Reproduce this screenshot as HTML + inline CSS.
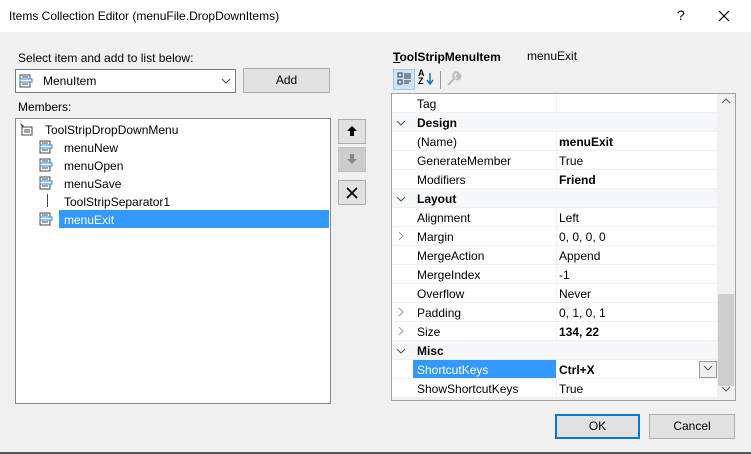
<!DOCTYPE html>
<html><head><style>
*{box-sizing:border-box;margin:0;padding:0}
body{width:751px;height:454px;background:#f0f0f0;font-family:"Liberation Sans",sans-serif;font-size:12px;color:#000;position:relative;overflow:hidden}
.a{position:absolute;white-space:nowrap}
.btn{position:absolute;background:#e1e1e1;border:1px solid #adadad;text-align:center}
.row{position:absolute;left:0;width:325px;height:19px;border-bottom:1px solid #f0f0f0;background:#fff}
.row .n{position:absolute;left:25px;top:3px}
.row .v{position:absolute;left:167px;top:3px}
.row .sep{position:absolute;left:164px;top:0;width:1px;height:19px;background:#f0f0f0}
.cat{background:#f5f7fa}
.cat .n{font-weight:bold}
.b{font-weight:bold}
</style></head><body>
<div class="a" style="left:0;top:0;width:751px;height:32px;background:#fff"></div>
<div class="a" style="left:9px;top:9px">Items Collection Editor (menuFile.DropDownItems)</div>
<div class="a" style="left:677px;top:7px;font-size:14px">?</div>
<svg class="a" style="left:718px;top:10px" width="12" height="12"><path d="M1 1L11 11M11 1L1 11" stroke="#000" stroke-width="1.2"/></svg>
<div class="a" style="left:0;top:452px;width:751px;height:2px;background:#555"></div>

<div class="a" style="left:18px;top:51px">Select item and add to list below:</div>
<div class="a" style="left:15px;top:69px;width:221px;height:24px;background:#fff;border:1px solid #7a7a7a"></div>
<svg class="a" style="left:19px;top:74px" width="14" height="14"><rect x="1" y="1" width="10" height="12" fill="none" stroke="#444"/><rect x="1" y="5" width="12" height="3" fill="#fff" stroke="#1e88e5"/><path d="M3 3H9M3 10H9" stroke="#444"/></svg>
<div class="a" style="left:43px;top:74px">MenuItem</div>
<svg class="a" style="left:221px;top:78px" width="10" height="6"><path d="M1 1L5 5L9 1" fill="none" stroke="#444"/></svg>
<div class="btn" style="left:243px;top:68px;width:87px;height:25px;line-height:23px">Add</div>

<div class="a" style="left:18px;top:100px">Members:</div>
<div class="a" style="left:15px;top:118px;width:316px;height:286px;background:#fff;border:1px solid #828790"></div>
<svg class="a" style="left:19px;top:122px" width="16" height="14"><path d="M1 1L5 4L3 5Z" fill="#333"/><rect x="3" y="5" width="10" height="8" fill="none" stroke="#444"/><path d="M5 8H11M5 10H11" stroke="#444"/></svg>
<div class="a" style="left:45px;top:123px">ToolStripDropDownMenu</div>
<svg class="a" style="left:39px;top:140px" width="14" height="14"><rect x="1" y="1" width="10" height="12" fill="none" stroke="#444"/><rect x="1" y="5" width="12" height="3" fill="#fff" stroke="#1e88e5"/><path d="M3 3H9M3 10H9" stroke="#444"/></svg>
<svg class="a" style="left:39px;top:158px" width="14" height="14"><rect x="1" y="1" width="10" height="12" fill="none" stroke="#444"/><rect x="1" y="5" width="12" height="3" fill="#fff" stroke="#1e88e5"/><path d="M3 3H9M3 10H9" stroke="#444"/></svg>
<svg class="a" style="left:39px;top:176px" width="14" height="14"><rect x="1" y="1" width="10" height="12" fill="none" stroke="#444"/><rect x="1" y="5" width="12" height="3" fill="#fff" stroke="#1e88e5"/><path d="M3 3H9M3 10H9" stroke="#444"/></svg>
<div class="a" style="left:47px;top:194px;width:1px;height:13px;background:#444"></div>
<svg class="a" style="left:39px;top:212px" width="14" height="14"><rect x="1" y="1" width="10" height="12" fill="none" stroke="#444"/><rect x="1" y="5" width="12" height="3" fill="#fff" stroke="#1e88e5"/><path d="M3 3H9M3 10H9" stroke="#444"/></svg>
<div class="a" style="left:64px;top:141px">menuNew</div>
<div class="a" style="left:64px;top:159px">menuOpen</div>
<div class="a" style="left:64px;top:177px">menuSave</div>
<div class="a" style="left:64px;top:195px">ToolStripSeparator1</div>
<div class="a" style="left:59px;top:210px;width:270px;height:18px;background:#3399ff"></div>
<div class="a" style="left:64px;top:213px;color:#fff">menuExit</div>

<div class="btn" style="left:338px;top:119px;width:28px;height:25px"></div>
<svg class="a" style="left:346px;top:125px" width="12" height="12"><path d="M6 1L11 6H8V11H4V6H1Z" fill="#000"/></svg>
<div class="btn" style="left:338px;top:147px;width:28px;height:25px;background:#cccccc;border-color:#bfbfbf"></div>
<svg class="a" style="left:346px;top:153px" width="12" height="12"><path d="M6 11L11 6H8V1H4V6H1Z" fill="#888"/></svg>
<div class="btn" style="left:338px;top:180px;width:28px;height:25px"></div>
<svg class="a" style="left:345px;top:186px" width="14" height="14"><path d="M2 2L12 12M12 2L2 12" stroke="#000" stroke-width="1.6"/></svg>

<div class="a b" style="left:393px;top:50px;text-decoration:underline;text-decoration-thickness:1px">T</div>
<div class="a b" style="left:393px;top:50px">ToolStripMenuItem</div>
<div class="a" style="left:527px;top:49px">menuExit</div>
<div class="a" style="left:393px;top:69px;width:22px;height:21px;background:#cce4f7;border:1px solid #99c9ef"></div>
<svg class="a" style="left:397px;top:72px" width="16" height="15"><rect x="1" y="1" width="4" height="4" fill="none" stroke="#333"/><rect x="1" y="8" width="4" height="4" fill="none" stroke="#333"/><path d="M7 2H14M7 4H14M7 6H14M7 9H14M7 11H12" stroke="#333"/></svg>
<div class="a" style="left:418px;top:69px;font-size:9px;font-weight:bold;line-height:8px">A<br>Z</div>
<svg class="a" style="left:426px;top:72px" width="8" height="14"><path d="M4 1V11M1 8L4 12L7 8" fill="none" stroke="#1e6fc8" stroke-width="1.5"/></svg>
<div class="a" style="left:440px;top:71px;width:1px;height:18px;background:#999"></div>
<svg class="a" style="left:446px;top:71px" width="16" height="16"><path d="M2 14L9 7M9 7A3 3 0 1 1 13 3L11 5L12 6L14 4A3 3 0 0 1 10 8" fill="none" stroke="#bbb" stroke-width="2"/></svg>

<div class="a" style="left:391px;top:93px;width:345px;height:308px;background:#f0f0f0;border:1px solid #a0a0a0">
 <div class="row" style="top:0"><span class="n">Tag</span><i class="sep"></i></div>
 <div class="row cat" style="top:19px"><span class="n">Design</span></div>
 <div class="row" style="top:38px"><span class="n">(Name)</span><i class="sep"></i><span class="v b">menuExit</span></div>
 <div class="row" style="top:57px"><span class="n">GenerateMember</span><i class="sep"></i><span class="v">True</span></div>
 <div class="row" style="top:76px"><span class="n">Modifiers</span><i class="sep"></i><span class="v b">Friend</span></div>
 <div class="row cat" style="top:95px"><span class="n">Layout</span></div>
 <div class="row" style="top:114px"><span class="n">Alignment</span><i class="sep"></i><span class="v">Left</span></div>
 <div class="row" style="top:133px"><span class="n">Margin</span><i class="sep"></i><span class="v">0, 0, 0, 0</span></div>
 <div class="row" style="top:152px"><span class="n">MergeAction</span><i class="sep"></i><span class="v">Append</span></div>
 <div class="row" style="top:171px"><span class="n">MergeIndex</span><i class="sep"></i><span class="v">-1</span></div>
 <div class="row" style="top:190px"><span class="n">Overflow</span><i class="sep"></i><span class="v">Never</span></div>
 <div class="row" style="top:209px"><span class="n">Padding</span><i class="sep"></i><span class="v">0, 1, 0, 1</span></div>
 <div class="row" style="top:228px"><span class="n">Size</span><i class="sep"></i><span class="v b">134, 22</span></div>
 <div class="row cat" style="top:247px"><span class="n">Misc</span></div>
 <div class="row" style="top:266px"><div class="a" style="left:21px;top:0;width:143px;height:18px;background:#3399ff"></div><span class="n" style="color:#fff">ShortcutKeys</span><span class="v b">Ctrl+X</span><div class="a" style="left:307px;top:1px;width:18px;height:17px;border:1px solid #999;background:#f0f0f0"></div></div>
 <div class="row" style="top:285px"><span class="n">ShowShortcutKeys</span><i class="sep"></i><span class="v">True</span></div>
 <div class="a" style="left:325px;top:0;width:18px;height:306px;background:#f0f0f0"></div>
 <div class="a" style="left:326px;top:200px;width:16px;height:92px;background:#cdcdcd"></div>
</div>
<svg class="a" style="left:396px;top:119px" width="10" height="260">
<path d="M1 2L5 6L9 2M1 78L5 82L9 78M1 230L5 234L9 230" fill="none" stroke="#555"/>
<path d="M3 113L7 117L3 121M3 189L7 193L3 197M3 208L7 212L3 216" fill="none" stroke="#999"/>
</svg>
<svg class="a" style="left:721px;top:97px" width="10" height="300"><path d="M1 6L5 2L9 6" fill="none" stroke="#555"/><path d="M1 290L5 294L9 290" fill="none" stroke="#555"/></svg>
<svg class="a" style="left:703px;top:365px" width="10" height="6"><path d="M1 1L5 5L9 1" fill="none" stroke="#555"/></svg>

<div class="btn" style="left:555px;top:414px;width:85px;height:25px;line-height:21px;border:2px solid #0078d7">OK</div>
<div class="btn" style="left:649px;top:414px;width:86px;height:25px;line-height:23px">Cancel</div>
</body></html>
